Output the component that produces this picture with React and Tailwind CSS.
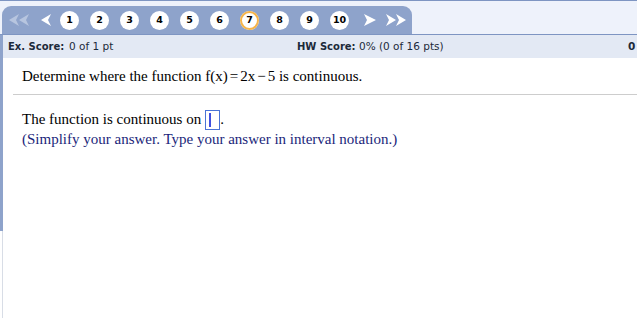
import React from 'react';

const pages = ['1', '2', '3', '4', '5', '6', '7', '8', '9', '10'];

const Arrow = ({ dir = 'left', double = false, faded = false, w = 10 }) => {
  const fill = faded ? '#b7c5df' : '#ffffff';
  const single = (x) =>
    dir === 'left'
      ? `M${x + w} 0 L${x} 6 L${x + w} 12 L${x + w - 3} 6 Z`
      : `M${x} 0 L${x + w} 6 L${x} 12 L${x + 3} 6 Z`;
  const total = double ? w * 2 : w;
  return (
    <svg width={total} height="12" viewBox={`0 0 ${total} 12`}>
      <path d={single(0)} fill={fill} />
      {double && <path d={single(w)} fill={fill} />}
    </svg>
  );
};

const PageDot = ({ label, active }) => (
  <div
    className={`w-[19px] h-[19px] rounded-full bg-white flex items-center justify-center text-[9.5px] font-bold text-black ${
      active ? 'ring-2 ring-[#f6b449] ring-inset' : ''
    }`}
    style={{ fontFamily: '"DejaVu Sans", sans-serif' }}
  >
    {label}
  </div>
);

export default function App() {
  return (
    <div className="w-[637px] h-[318px] bg-white overflow-hidden">
      <div className="h-px bg-[#7e95c2]" />
      <div className="bg-[#eef2fb] pt-[5px] pl-[2px] flex border-b border-[#7e95c2]">
        <div className="w-[410px] h-[28px] bg-[#8ea3cb] rounded-t-[9px] flex items-center pl-[7px]">
          <Arrow dir="left" double faded />
          <div className="ml-[12px] flex">
            <Arrow dir="left" />
          </div>
          <div className="flex gap-[11px] ml-[9px]">
            {pages.map((p) => (
              <PageDot key={p} label={p} active={p === '7'} />
            ))}
          </div>
          <div className="ml-[15px] flex">
            <Arrow dir="right" w={12} />
          </div>
          <div className="ml-[10px] flex">
            <Arrow dir="right" double />
          </div>
        </div>
      </div>
      <div className="flex h-[284px]">
        <div className="w-[3px] flex flex-col">
          <div className="h-[196px] bg-[#8ea3cb]" />
          <div className="flex-1 border-r border-[#d8dde6]" />
        </div>
        <div className="flex-1">
          <div
            className="h-[23px] bg-[#e3e9f4] flex items-center text-[#1c2a3a] pl-[5px]"
            style={{ fontFamily: '"DejaVu Sans", sans-serif' }}
          >
            <span className="w-[61px] font-bold text-[10px]">Ex. Score:</span>
            <span className="w-[228px] text-[10.5px]">0 of 1 pt</span>
            <span className="w-[62px] font-bold text-[10px]">HW Score:</span>
            <span className="w-[269px] text-[10.5px]">0% (0 of 16 pts)</span>
            <span className="font-bold text-[10.5px]">0</span>
          </div>
          <div
            className="text-[15px] text-black"
            style={{ fontFamily: '"Liberation Serif", serif' }}
          >
            <div className="pl-[19px] pt-[7px] pb-[6px]">
              Determine where the function f(x)<span className="mx-[2px]">=</span>2x<span className="mx-[2px]">−</span>5 is continuous.
            </div>
            <div className="ml-[10px] border-t border-[#cdcdcd]" />
            <div className="pl-[19px] pt-[15px] leading-[19px]">
              <div className="flex items-center">
                The function is continuous on
                <span className="ml-[4px] inline-flex items-center w-[15px] h-[20px] border border-[#4a74d6] pl-[3px]">
                  <span className="w-[2px] h-[14px] bg-[#4050e0]" />
                </span>
                <span>.</span>
              </div>
              <div className="text-[#1b1f7a]">
                (Simplify your answer. Type your answer in interval notation.)
              </div>
            </div>
          </div>
        </div>
      </div>
    </div>
  );
}
